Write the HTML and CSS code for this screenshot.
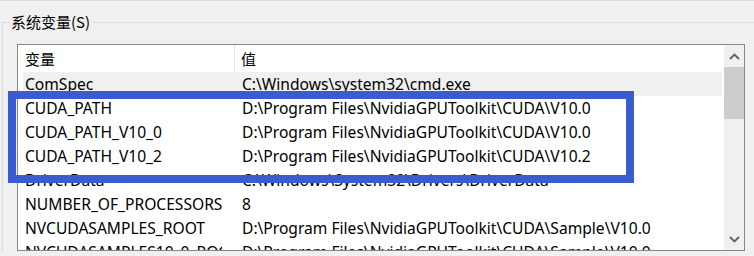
FILE: index.html
```html
<!DOCTYPE html>
<html lang="zh-CN">
<head>
    <meta charset="UTF-8">
    <meta name="viewport" content="width=device-width, initial-scale=1.0">
    <title>系统变量</title>
    <link rel="stylesheet" href="styles.css">
</head>
<body>
    <div class="topline"></div>
    <div class="group">
        <div class="group-title">系统变量(S)</div>
        <div class="listbox">
            <div class="list-body">
                <div class="list-head">
                    <div class="col-name">变量</div>
                    <div class="col-value">值</div>
                </div>
                <div class="row alt">
                    <div class="col-name">ComSpec</div>
                    <div class="col-value">C:\Windows\system32\cmd.exe</div>
                </div>
                <div class="row">
                    <div class="col-name">CUDA_PATH</div>
                    <div class="col-value">D:\Program Files\NvidiaGPUToolkit\CUDA\V10.0</div>
                </div>
                <div class="row">
                    <div class="col-name">CUDA_PATH_V10_0</div>
                    <div class="col-value">D:\Program Files\NvidiaGPUToolkit\CUDA\V10.0</div>
                </div>
                <div class="row">
                    <div class="col-name">CUDA_PATH_V10_2</div>
                    <div class="col-value">D:\Program Files\NvidiaGPUToolkit\CUDA\V10.2</div>
                </div>
                <div class="row">
                    <div class="col-name">DriverData</div>
                    <div class="col-value">C:\Windows\System32\Drivers\DriverData</div>
                </div>
                <div class="row">
                    <div class="col-name">NUMBER_OF_PROCESSORS</div>
                    <div class="col-value">8</div>
                </div>
                <div class="row">
                    <div class="col-name">NVCUDASAMPLES_ROOT</div>
                    <div class="col-value">D:\Program Files\NvidiaGPUToolkit\CUDA\Sample\V10.0</div>
                </div>
                <div class="row">
                    <div class="col-name">NVCUDASAMPLES10_0_ROOT</div>
                    <div class="col-value">D:\Program Files\NvidiaGPUToolkit\CUDA\Sample\V10.0</div>
                </div>
            </div>
            <div class="scrollbar">
                <div class="sb-button">
                    <svg width="11" height="7" viewBox="0 0 11 7"><polyline points="1,6 5.5,1.5 10,6" fill="none" stroke="#606060" stroke-width="1.8"/></svg>
                </div>
                <div class="sb-thumb"></div>
                <div class="sb-track"></div>
                <div class="sb-button">
                    <svg width="11" height="7" viewBox="0 0 11 7"><polyline points="1,1 5.5,5.5 10,1" fill="none" stroke="#606060" stroke-width="1.8"/></svg>
                </div>
            </div>
        </div>
    </div>

    <!-- highlight drawn over the list -->
    <div class="mark"></div>
</body>
</html>
```

FILE: styles.css
```css
* {
    margin: 0;
    padding: 0;
    box-sizing: border-box;
}

body {
    background: #f0f0f0;
    font-family: "Noto Sans", "Noto Sans CJK SC", sans-serif;
    font-size: 15.6px;
    color: #000;
    overflow: hidden;
    height: 256px;
}

.topline {
    height: 1px;
    background: #dcdcdc;
}

.group {
    margin: 21px 0 0 2px;
    border-top: 1px solid #dcdcdc;
    border-left: 1px solid #dcdcdc;
}

.group-title {
    width: max-content;
    margin: -11px 0 0 7px;
    padding: 0 1px;
    line-height: 20px;
    font-size: 15px;
    background: #f0f0f0;
    font-family: "Noto Sans CJK SC", sans-serif;
}

.listbox {
    display: flex;
    width: 728px;
    height: 207px;
    margin: 12px 0 0 14px;
    border: 1px solid #828790;
    background: #fff;
    overflow: hidden;
}

.list-body {
    width: 704px;
    padding-left: 5px;
    margin-right: 2px;
}

.list-head,
.row {
    display: flex;
    align-items: center;
    white-space: nowrap;
}

.list-head {
    height: 27px;
    font-size: 15px;
    font-family: "Noto Sans CJK SC", sans-serif;
}

.list-head .col-name {
    width: 212px;
    height: 27px;
    line-height: 27px;
    border-right: 1px solid #e5e5e5;
}

.row {
    height: 24px;
}

.row.alt {
    background: #f0f0f0;
}

.row .col-name {
    width: 199px;
    margin-right: 14px;
}

.col-name {
    padding-left: 2px;
    overflow: hidden;
    flex-shrink: 0;
}

.col-value {
    padding-left: 6px;
}

.scrollbar {
    width: 20px;
    display: flex;
    flex-direction: column;
    background: #f0f0f0;
}

.sb-button {
    height: 22px;
    display: flex;
    align-items: center;
    justify-content: center;
}

.sb-thumb {
    height: 52px;
    background: #cdcdcd;
}

.sb-track {
    flex: 1;
}

.mark {
    position: absolute;
    left: 8px;
    top: 91px;
    width: 626px;
    height: 92px;
    border: 8px solid #3b5bd0;
}
```
